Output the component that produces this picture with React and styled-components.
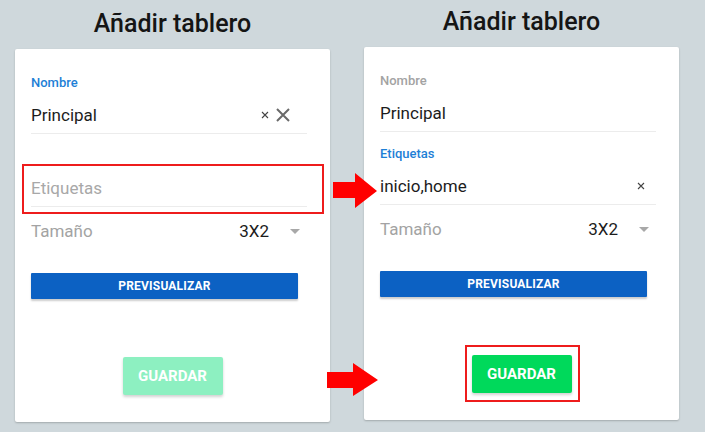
import React from 'react'
import styled, { createGlobalStyle } from 'styled-components'

const GlobalStyle = createGlobalStyle`
  * { box-sizing: border-box; }
  body {
    margin: 0;
    background: #cfd8dc;
    font-family: Roboto, "Liberation Sans", sans-serif;
  }
`;

const Page = styled.div`
  position: relative;
  width: 705px;
  height: 432px;
  overflow: hidden;
  background: #cfd8dc;
  display: flex;
  gap: 34px;
  padding-left: 15px;
`;

const Column = styled.div`
  width: 315px;
  display: flex;
  flex-direction: column;
  margin-top: ${({ $shift }) => $shift || 0}px;
`;

const Title = styled.h1`
  margin: 0;
  height: 49px;
  padding-top: 9px;
  font-size: 25px;
  line-height: 29px;
  font-weight: 500;
  color: #151515;
  text-align: center;
`;

const Card = styled.div`
  height: 373px;
  background: #fff;
  border-radius: 2px;
  box-shadow: 0 1px 2px rgba(0, 0, 0, 0.22);
  padding: 26px 23px 27px 16px;
  display: flex;
  flex-direction: column;
`;

const Field = styled.div`
  margin-top: ${({ $gap }) => $gap || 0}px;
`;

const Label = styled.div`
  height: 15px;
  font-size: 13px;
  line-height: 15px;
  font-weight: 500;
  color: ${({ $focused }) => ($focused ? '#1e7fd6' : '#a3a3a3')};
`;

const InputRow = styled.div`
  position: relative;
  height: 44px;
  display: flex;
  align-items: flex-end;
  padding-bottom: 8px;
  border-bottom: 1px solid #ececec;
`;

const Value = styled.span`
  flex: 1;
  font-size: 17px;
  line-height: 20px;
  color: ${({ $placeholder }) => ($placeholder ? '#a8a8a8' : '#1c1c1c')};
`;

const Clear = styled.span`
  display: flex;
  align-items: center;
  gap: 7px;
  height: 20px;
  margin-right: ${({ $right }) => $right || 0}px;
`;

const Highlight = styled.div`
  position: absolute;
  top: 1px;
  left: -9px;
  right: -17px;
  bottom: -8px;
  border: 2px solid #ee1c1c;
  pointer-events: none;
`;

const SelectRow = styled.div`
  margin-top: 8px;
  height: 32px;
  display: flex;
  align-items: center;
  font-size: 17px;
`;

const SelectLabel = styled.span`
  flex: 1;
  color: #a3a3a3;
`;

const SelectValue = styled.span`
  color: #1c1c1c;
  margin-right: 21px;
`;

const Caret = styled.span`
  width: 0;
  height: 0;
  border-left: 5px solid transparent;
  border-right: 5px solid transparent;
  border-top: 5px solid #a8a8a8;
  margin-right: 7px;
`;

const PreviewButton = styled.button`
  margin-top: 26px;
  width: 267px;
  height: 26px;
  border: none;
  border-radius: 1px;
  background: #0c61c3;
  color: #fff;
  font-family: inherit;
  font-size: 12px;
  font-weight: 700;
  letter-spacing: 0.2px;
  box-shadow: 0 2px 2px rgba(0, 0, 0, 0.2);
  padding: 0;
`;

const Footer = styled.div`
  margin-top: auto;
  padding-left: 7px;
  display: flex;
  justify-content: center;
`;

const SaveFrame = styled.div`
  margin: -10px -8px -9px -7px;
  padding: 8px 6px 7px 5px;
  border: 2px solid #ee1c1c;
`;

const SaveButton = styled.button`
  width: 100px;
  height: 38px;
  border: none;
  border-radius: 2px;
  background: ${({ disabled }) => (disabled ? '#8df0c1' : '#00d95b')};
  color: #fff;
  font-family: inherit;
  font-size: 15px;
  font-weight: 700;
  box-shadow: 0 2px 3px rgba(0, 0, 0, 0.18);
  padding: 0;
`;

const Arrow = styled.svg`
  position: absolute;
  left: ${({ $x }) => $x}px;
  top: ${({ $y }) => $y}px;
`;

const SmallX = () => (
  <svg width="8" height="8" viewBox="0 0 8 8">
    <path d="M1 1L7 7M7 1L1 7" stroke="#444" strokeWidth="1.1" />
  </svg>
);

const BigX = () => (
  <svg width="14" height="14" viewBox="0 0 14 14">
    <path d="M1 1L13 13M13 1L1 13" stroke="#6a6a6a" strokeWidth="2" />
  </svg>
);

const Size = () => (
  <SelectRow>
    <SelectLabel>Tamaño</SelectLabel>
    <SelectValue>3X2</SelectValue>
    <Caret />
  </SelectRow>
);

const App = () => {
  return (
    <>
      <GlobalStyle />
      <Page>
        <Column>
          <Title>Añadir tablero</Title>
          <Card>
            <Field>
              <Label $focused>Nombre</Label>
              <InputRow>
                <Value>Principal</Value>
                <Clear $right={17}>
                  <SmallX />
                  <BigX />
                </Clear>
              </InputRow>
            </Field>
            <Field $gap={14}>
              <Label />
              <InputRow>
                <Value $placeholder>Etiquetas</Value>
                <Highlight />
              </InputRow>
            </Field>
            <Size />
            <PreviewButton>PREVISUALIZAR</PreviewButton>
            <Footer>
              <SaveButton disabled>GUARDAR</SaveButton>
            </Footer>
          </Card>
        </Column>

        <Column $shift={-2}>
          <Title>Añadir tablero</Title>
          <Card>
            <Field>
              <Label>Nombre</Label>
              <InputRow>
                <Value>Principal</Value>
              </InputRow>
            </Field>
            <Field $gap={14}>
              <Label $focused>Etiquetas</Label>
              <InputRow>
                <Value>inicio,home</Value>
                <Clear $right={11}>
                  <SmallX />
                </Clear>
              </InputRow>
            </Field>
            <Size />
            <PreviewButton>PREVISUALIZAR</PreviewButton>
            <Footer>
              <SaveFrame>
                <SaveButton>GUARDAR</SaveButton>
              </SaveFrame>
            </Footer>
          </Card>
        </Column>

        <Arrow $x={333} $y={173} width="44" height="35" viewBox="0 0 44 35">
          <polygon points="0,9 22,9 22,0 44,18 22,35 22,25 0,25" fill="#ff0000" />
        </Arrow>
        <Arrow $x={327} $y={363} width="51" height="33" viewBox="0 0 51 33">
          <polygon points="0,9 26,9 26,0 51,17 26,33 26,25 0,25" fill="#ff0000" />
        </Arrow>
      </Page>
    </>
  );
};

export default App
